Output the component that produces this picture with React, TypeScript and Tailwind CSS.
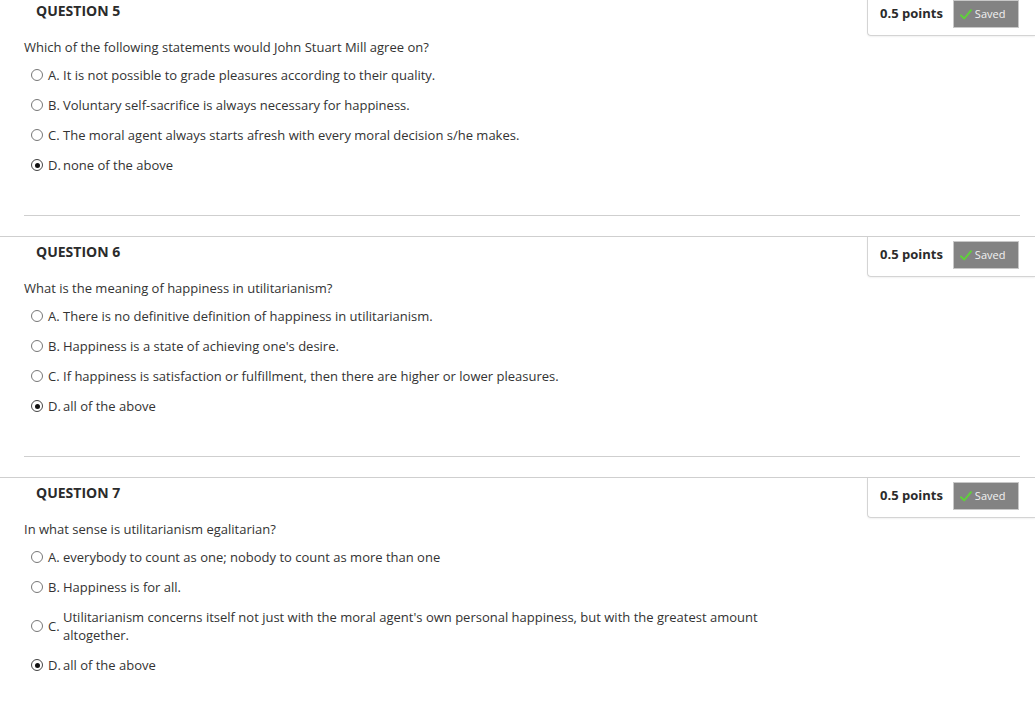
import React from "react";

type Question = {
  num: number;
  prompt: string;
  options: { label: string; text: string }[];
  selected: number;
};

const questions: Question[] = [
  {
    num: 5,
    prompt: "Which of the following statements would John Stuart Mill agree on?",
    options: [
      { label: "A.", text: "It is not possible to grade pleasures according to their quality." },
      { label: "B.", text: "Voluntary self-sacrifice is always necessary for happiness." },
      { label: "C.", text: "The moral agent always starts afresh with every moral decision s/he makes." },
      { label: "D.", text: "none of the above" },
    ],
    selected: 3,
  },
  {
    num: 6,
    prompt: "What is the meaning of happiness in utilitarianism?",
    options: [
      { label: "A.", text: "There is no definitive definition of happiness in utilitarianism." },
      { label: "B.", text: "Happiness is a state of achieving one's desire." },
      { label: "C.", text: "If happiness is satisfaction or fulfillment, then there are higher or lower pleasures." },
      { label: "D.", text: "all of the above" },
    ],
    selected: 3,
  },
  {
    num: 7,
    prompt: "In what sense is utilitarianism egalitarian?",
    options: [
      { label: "A.", text: "everybody to count as one; nobody to count as more than one" },
      { label: "B.", text: "Happiness is for all." },
      {
        label: "C.",
        text: "Utilitarianism concerns itself not just with the moral agent's own personal happiness, but with the greatest amount altogether.",
      },
      { label: "D.", text: "all of the above" },
    ],
    selected: 3,
  },
];

function Radio({ checked }: { checked: boolean }) {
  return (
    <span
      className={`flex h-[12px] w-[12px] shrink-0 items-center justify-center rounded-full border bg-white ${
        checked ? "border-[#444]" : "border-[#777]"
      }`}
    >
      {checked && <span className="h-[5px] w-[5px] rounded-full bg-[#111]" />}
    </span>
  );
}

function SavedBadge() {
  return (
    <div className="flex h-[28px] w-[66px] items-center gap-[3px] border border-[#c8c8c8] bg-[#838383] pl-[6px] text-[11px] text-[#f2f2f2]">
      <svg width="12" height="11" viewBox="0 0 12 11">
        <path d="M1 6.2 L4.2 9.4 L11 1.2" fill="none" stroke="#5fd03a" strokeWidth="2" strokeLinecap="round" strokeLinejoin="round" />
      </svg>
      <span>Saved</span>
    </div>
  );
}

function QuestionBlock({ q }: { q: Question }) {
  return (
    <div className="border-t border-[#cfcfcf]">
      <div className="flex h-[40px] justify-between">
        <h3 className="pl-[36px] pt-[6px] text-[14px] font-bold leading-[18px] text-[#2b2b2b]">
          QUESTION {q.num}
        </h3>
        <div className="flex w-[168px] items-start rounded-bl-[4px] border-b border-l border-[#d4d4d4] pl-[12px] pt-[4px] shadow-[0_1px_2px_rgba(0,0,0,0.06)]">
          <span className="pt-[4px] text-[13px] font-bold leading-[18px] text-[#2b2b2b]">0.5 points</span>
          <div className="ml-[10px]">
            <SavedBadge />
          </div>
        </div>
      </div>
      <div className="px-[24px]">
        <p className="mt-[2px] text-[13px] leading-[18px] text-[#333]">{q.prompt}</p>
        <div className="mt-[4px] flex flex-col">
          {q.options.map((o, i) => (
            <div key={o.label} className="flex min-h-[30px] items-center py-[6px] pl-[7px] text-[13px] leading-[18px] text-[#333]">
              <Radio checked={i === q.selected} />
              <span className="w-[15px] shrink-0 pl-[5px] box-content">{o.label}</span>
              <span className="max-w-[730px]">{o.text}</span>
            </div>
          ))}
        </div>
        <div className="mr-[-9px] mt-[35px] border-t border-[#cfcfcf]" />
        <div className="h-[20px]" />
      </div>
    </div>
  );
}

export default function App() {
  return (
    <div className="min-h-[708px] w-[1035px] overflow-hidden bg-white font-['Open_Sans',sans-serif]">
      <div className="mt-[-5px]">
        {questions.map((q) => (
          <QuestionBlock key={q.num} q={q} />
        ))}
      </div>
    </div>
  );
}
